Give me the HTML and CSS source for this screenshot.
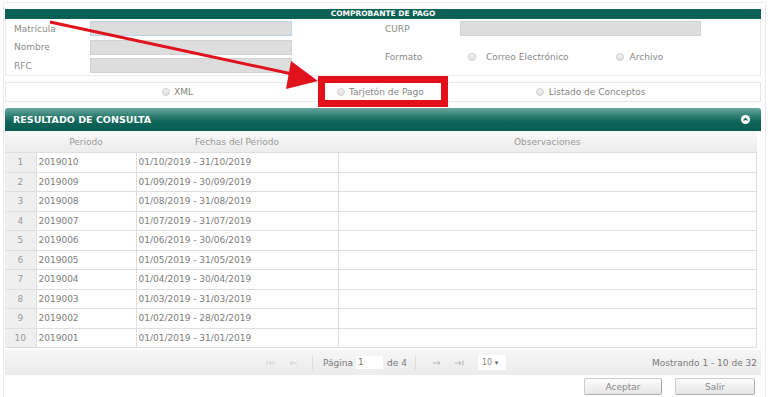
FILE: index.html
```html
<!DOCTYPE html>
<html lang="es">
<head>
<meta charset="utf-8">
<title>Comprobante de Pago</title>
<link rel="stylesheet" href="styles.css">
</head>
<body>
<div class="page">
  <div class="titlebar">COMPROBANTE DE PAGO</div>
  <div class="form">
    <div class="col left">
      <div class="field"><span class="lbl">Matrícula</span><span class="input focus"></span></div>
      <div class="field"><span class="lbl">Nombre</span><span class="input"></span></div>
      <div class="field"><span class="lbl">RFC</span><span class="input"></span></div>
    </div>
    <div class="col right">
      <div class="field"><span class="lbl">CURP</span><span class="input wide"></span></div>
      <div class="field fmt">
        <span class="lbl">Formato</span>
        <span class="radio r-correo"></span><span class="rtxt">Correo Electrónico</span>
        <span class="radio r-archivo"></span><span class="rtxt">Archivo</span>
      </div>
    </div>
  </div>
  <div class="opts">
    <span class="opt o-xml"><span class="radio"></span>XML</span>
    <span class="opt o-tarjeton"><span class="radio"></span>Tarjetón de Pago</span>
    <span class="opt o-listado"><span class="radio"></span>Listado de Conceptos</span>
  </div>
  <div class="panel">
    <div class="panel-head"><span>RESULTADO DE CONSULTA</span><span class="collapse"><svg width="9" height="9" viewBox="0 0 9 9"><circle cx="4.5" cy="4.5" r="4.5" fill="#fff"/><path d="M2.6 5.4 L4.5 3.5 L6.4 5.4" stroke="#1b6a60" stroke-width="1.4" fill="none"/></svg></span></div>
    <table class="grid">
      <colgroup><col class="c-num"><col class="c-per"><col class="c-fec"><col></colgroup>
      <thead><tr><th></th><th>Periodo</th><th>Fechas del Periodo</th><th>Observaciones</th></tr></thead>
      <tbody>
        <tr><td class="num">1</td><td>2019010</td><td>01/10/2019 - 31/10/2019</td><td></td></tr>
        <tr><td class="num">2</td><td>2019009</td><td>01/09/2019 - 30/09/2019</td><td></td></tr>
        <tr><td class="num">3</td><td>2019008</td><td>01/08/2019 - 31/08/2019</td><td></td></tr>
        <tr><td class="num">4</td><td>2019007</td><td>01/07/2019 - 31/07/2019</td><td></td></tr>
        <tr><td class="num">5</td><td>2019006</td><td>01/06/2019 - 30/06/2019</td><td></td></tr>
        <tr><td class="num">6</td><td>2019005</td><td>01/05/2019 - 31/05/2019</td><td></td></tr>
        <tr><td class="num">7</td><td>2019004</td><td>01/04/2019 - 30/04/2019</td><td></td></tr>
        <tr><td class="num">8</td><td>2019003</td><td>01/03/2019 - 31/03/2019</td><td></td></tr>
        <tr><td class="num">9</td><td>2019002</td><td>01/02/2019 - 28/02/2019</td><td></td></tr>
        <tr><td class="num">10</td><td>2019001</td><td>01/01/2019 - 31/01/2019</td><td></td></tr>
      </tbody>
    </table>
    <div class="pager">
      <div></div>
      <div class="pg-mid">
        <svg class="pg-ico" width="10" height="6" viewBox="0 0 10 6"><path d="M1 0.5 V5.5 M9 3 H3 M5 1 L3 3 L5 5" stroke="#cfcfcf" stroke-width="1" fill="none"/></svg>
        <svg class="pg-ico" width="10" height="6" viewBox="0 0 10 6"><path d="M9 3 H2 M4 1 L2 3 L4 5" stroke="#cfcfcf" stroke-width="1" fill="none"/></svg>
        <span class="pg-sep"></span>
        <span class="pg-txt">Página</span>
        <span class="pg-input">1</span>
        <span class="pg-txt">de 4</span>
        <span class="pg-sep"></span>
        <svg class="pg-ico" width="10" height="6" viewBox="0 0 10 6"><path d="M1 3 H8 M6 1 L8 3 L6 5" stroke="#b5b5b5" stroke-width="1" fill="none"/></svg>
        <svg class="pg-ico" width="10" height="6" viewBox="0 0 10 6"><path d="M1 3 H7 M5 1 L7 3 L5 5 M9 0.5 V5.5" stroke="#b5b5b5" stroke-width="1" fill="none"/></svg>
        <span class="pg-select">10 <span class="caret">▾</span></span>
      </div>
      <div class="pg-info">Mostrando 1 - 10 de 32</div>
    </div>
  </div>
  <div class="actions">
    <button class="btn">Aceptar</button>
    <button class="btn btn-salir">Salir</button>
  </div>
</div>
<div class="highlight"></div>
<svg class="arrow" width="768" height="397" viewBox="0 0 768 397">
  <line x1="50" y1="22" x2="292" y2="74" stroke="#e0121b" stroke-width="3"/>
  <polygon points="318,81 291,61 286,89" fill="#e0121b"/>
</svg>
</body>
</html>
```

FILE: styles.css
```css
html, body {
  margin: 0;
  padding: 0;
  background: #fff;
}
body {
  font-family: "DejaVu Sans", Verdana, sans-serif;
  font-size: 9px;
  color: #888;
  width: 768px;
  height: 397px;
  overflow: hidden;
  position: relative;
}
.page {
  margin: 2px 2px 0 3px;
  border: 1px solid #ececec;
  border-bottom: 0;
  padding: 6px 4px 0 1px;
  height: 400px;
  box-sizing: border-box;
}
.titlebar {
  height: 10px;
  background: #0b6156;
  color: #fff;
  font-weight: bold;
  font-size: 7.5px;
  line-height: 10px;
  text-align: center;
}
.form {
  display: flex;
  height: 57px;
  box-sizing: border-box;
  border: 1px solid #ececec;
  border-top: 0;
  padding-top: 2px;
}
.col {
  display: flex;
  flex-direction: column;
  gap: 3.5px;
}
.col.left {
  width: 371px;
  padding-left: 8px;
}
.field {
  display: flex;
  align-items: center;
  height: 15px;
}
.lbl {
  width: 76px;
  flex: none;
  color: #8a8a8a;
}
.right .lbl {
  width: 75px;
}
.input {
  display: block;
  width: 202px;
  height: 15px;
  box-sizing: border-box;
  background: #dddddd;
  border: 1px solid #d2d2d2;
}
.input.focus {
  border-color: #b9d3ec;
}
.input.wide {
  width: 241px;
}
.field.fmt {
  margin-top: 10px;
}
.radio {
  display: inline-block;
  width: 8px;
  height: 8px;
  box-sizing: border-box;
  border-radius: 50%;
  border: 1px solid #cdcdcd;
  background: linear-gradient(#f4f4f4, #dedede);
  flex: none;
}
.r-correo {
  margin-left: 8px;
  margin-right: 10px;
}
.r-archivo {
  margin-left: 47px;
  margin-right: 6px;
}
.opts {
  margin-top: 6px;
  height: 20px;
  box-sizing: border-box;
  border: 1px solid #e6e6e6;
  display: flex;
  align-items: center;
  padding-left: 156px;
}
.opt {
  display: inline-flex;
  align-items: center;
  color: #858585;
}
.opt .radio {
  margin-right: 4px;
}
.o-tarjeton {
  margin-left: 144px;
}
.o-listado {
  margin-left: 112px;
}
.o-listado .radio {
  margin-right: 5px;
}
.panel {
  margin-top: 6px;
}
.panel-head {
  height: 23px;
  border-radius: 3px 3px 0 0;
  background: linear-gradient(#6aa79e 0%, #2f7e73 35%, #0e6559 60%, #0a5c52 100%);
  color: #fff;
  font-weight: bold;
  font-size: 9.5px;
  display: flex;
  align-items: center;
  justify-content: space-between;
  padding: 0 11px 0 8px;
}
.collapse {
  display: flex;
}
.grid {
  border-collapse: collapse;
  table-layout: fixed;
  width: 752px;
  font-size: 9px;
}
.c-num { width: 31px; }
.c-per { width: 100px; }
.c-fec { width: 202px; }
.grid th {
  height: 21px;
  padding: 0;
  font-weight: normal;
  color: #999;
  background: linear-gradient(#f8f8f8, #ececec);
  text-align: center;
}
.grid td {
  height: 18.5px;
  padding: 0 0 0 2px;
  border: 1px solid #dedede;
  color: #7d7d7d;
  white-space: nowrap;
}
.grid td.num {
  background: #efefef;
  color: #999;
  text-align: center;
  padding: 0;
  border-left: 0;
}
.pager {
  margin-top: 2px;
  height: 25px;
  background: linear-gradient(#f6f6f6, #ebebeb);
  display: grid;
  grid-template-columns: 1fr auto 1fr;
  align-items: center;
  color: #7a7a7a;
}
.pg-mid {
  display: flex;
  align-items: center;
}
.pg-ico {
  margin: 0 6px;
}
.pg-sep {
  width: 1px;
  height: 14px;
  background: #dcdcdc;
  margin: 0 10px 0 8px;
}
.pg-input {
  width: 27px;
  height: 13px;
  line-height: 13px;
  background: #fff;
  margin: 0 4px 0 3px;
  padding-left: 2px;
  box-sizing: border-box;
}
.pg-select {
  margin-left: 8px;
  width: 28px;
  height: 15px;
  line-height: 15px;
  background: #fff;
  font-size: 8px;
  padding-left: 4px;
  box-sizing: border-box;
  color: #888;
}
.caret {
  font-size: 7px;
  color: #666;
}
.pg-info {
  text-align: right;
  padding-right: 4px;
}
.actions {
  margin-top: 3px;
  display: flex;
  justify-content: flex-end;
  gap: 13px;
  padding-right: 6px;
}
.btn {
  width: 78px;
  height: 17px;
  padding: 0;
  font-family: "DejaVu Sans", Verdana, sans-serif;
  font-size: 9px;
  color: #8a8a8a;
  border: 1px solid #cccccc;
  border-right-color: #a8a8a8;
  border-bottom-color: #b0b0b0;
  border-radius: 2px;
  background: linear-gradient(#fdfdfd, #e6e6e6);
}
.btn-salir {
  width: 80px;
}
.highlight {
  position: absolute;
  left: 318px;
  top: 76px;
  width: 130px;
  height: 31px;
  box-sizing: border-box;
  border: 7px solid #e3101a;
  pointer-events: none;
}
.arrow {
  position: absolute;
  left: 0;
  top: 0;
  pointer-events: none;
}
```
